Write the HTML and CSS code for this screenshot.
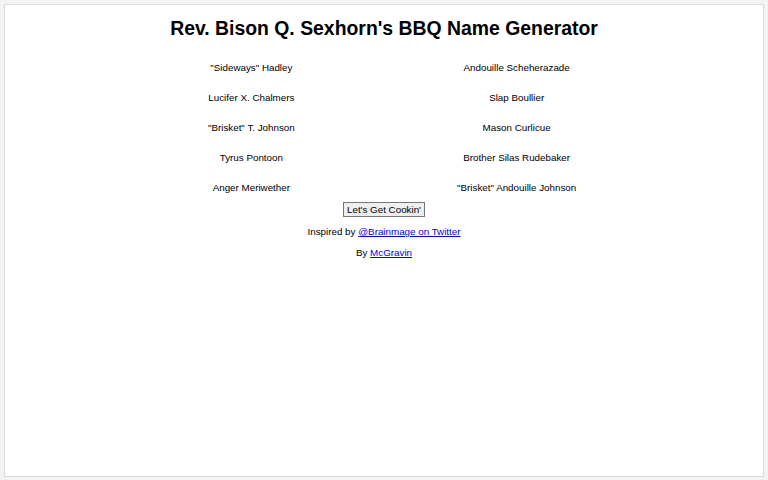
FILE: index.html
```html
<!DOCTYPE html>
<html lang="en">
<head>
  <meta charset="UTF-8">
  <meta name="viewport" content="width=device-width, initial-scale=1">
  <title>BBQ Name Generator</title>
  <link rel="stylesheet" href="styles.css">
</head>
<body>

  <div class="page">
    <h1>Rev. Bison Q. Sexhorn's BBQ Name Generator</h1>

    <!-- Generated names, two columns -->
    <table class="names">
      <tr><td>"Sideways" Hadley</td><td>Andouille Scheherazade</td></tr>
      <tr><td>Lucifer X. Chalmers</td><td>Slap Boullier</td></tr>
      <tr><td>"Brisket" T. Johnson</td><td>Mason Curlicue</td></tr>
      <tr><td>Tyrus Pontoon</td><td>Brother Silas Rudebaker</td></tr>
      <tr><td>Anger Meriwether</td><td>"Brisket" Andouille Johnson</td></tr>
    </table>

    <div class="actions">
      <button type="button">Let's Get Cookin'</button>
    </div>

    <p class="credit">Inspired by <a href="#">@Brainmage on Twitter</a></p>
    <p class="credit">By <a href="#">McGravin</a></p>
  </div>

</body>
</html>
```

FILE: styles.css
```css
body {
  font-family: "Liberation Sans", Arial, sans-serif;
  background: #f3f3f3;
  margin: 0;
  padding: 4px;
}

.page {
  background: white;
  border: 1px solid #dcdcdc;
  height: 471px;
  text-align: center;
}

h1 {
  font-size: 19.4px;
  margin: 12px 0 12px;
}

.names {
  width: 70%;
  margin: 0 auto;
  border-collapse: collapse;
  font-size: 9.8px;
}

.names td {
  width: 50%;
  height: 30px;
  padding: 0;
  text-align: center;
}

.actions {
  margin-top: -3px;
}

.actions button {
  font-family: inherit;
  font-size: 9.8px;
  padding: 1px 3px;
  border: 1px solid #767676;
  border-radius: 0;
  background: #efefef;
}

.credit {
  font-size: 9.8px;
  margin: 9px 0 0;
}

.credit + .credit {
  margin-top: 10px;
}

.credit a {
  color: #0000ee;
}
```
